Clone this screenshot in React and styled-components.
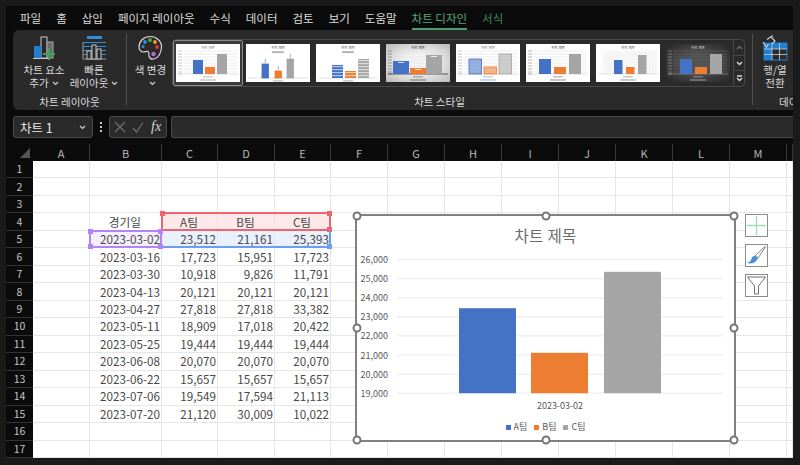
import React from 'react';
import styled, { createGlobalStyle } from 'styled-components';

const GlobalStyle = createGlobalStyle`
    html, body {
        margin: 0;
        padding: 0;
        width: 800px;
        height: 465px;
        overflow: hidden;
        background: #1a1a1a;
        font-family: "Noto Sans CJK KR", "Noto Sans", sans-serif;
    }
    * { box-sizing: border-box; }
`;

const Page = styled.div`
    width: 800px;
    height: 465px;
    padding: 6px 7px 7px 6px;
`;

const Window = styled.div`
    width: 100%;
    height: 100%;
    background: #0b0b0b;
    display: flex;
    flex-direction: column;
    overflow: hidden;
`;

const Tabs = styled.div`
    height: 24px;
    flex: none;
    display: flex;
    align-items: flex-start;
    gap: 15px;
    padding: 3px 0 0 14px;
`;

const Tab = styled.div`
    height: 21px;
    line-height: 18px;
    font-size: 11.5px;
    white-space: nowrap;
    color: ${p => (p.$active ? '#58a878' : p.$context ? '#3f8a5c' : '#dcdcdc')};
    border-bottom: 2px solid ${p => (p.$active ? '#4fa06f' : 'transparent')};
`;

const Ribbon = styled.div`
    height: 80px;
    flex: none;
    margin-left: 7px;
    display: flex;
    background: #2a2a2a;
    border-radius: 6px 0 0 6px;
    overflow: hidden;
`;

const Group = styled.div`
    flex: ${p => (p.$grow ? 1 : 'none')};
    width: ${p => p.$width}px;
    display: flex;
    flex-direction: column;
    align-items: center;
    position: relative;
`;

const GroupBody = styled.div`
    height: 63px;
    width: 100%;
    display: flex;
    padding: ${p => p.$pad || '5px 0 0 0'};
`;

const GroupLabel = styled.div`
    font-size: 10.5px;
    line-height: 17px;
    color: #dcdcdc;
    white-space: nowrap;
    ${p => p.$offset && `align-self: flex-start; margin-left: ${p.$offset}px;`}
`;

const Divider = styled.div`
    flex: none;
    width: 1px;
    margin: 4px 0 5px;
    background: #505050;
`;

const RibbonButton = styled.div`
    width: ${p => p.$width}px;
    flex: none;
    display: flex;
    flex-direction: column;
    align-items: center;
    color: #dcdcdc;
    font-size: 10.5px;
    line-height: 13px;
    white-space: nowrap;
    svg.big { margin-bottom: 2px; display: block; }
`;

const Chevron = styled.svg`
    width: 7px;
    height: 5px;
    margin-left: 3px;
    vertical-align: 1px;
    fill: none;
    stroke: #cfcfcf;
    stroke-width: 1.2;
`;

const Gallery = styled.div`
    width: 573px;
    height: 48px;
    margin: 4px 0 0 -1px;
    flex: none;
    border: 1px solid #484848;
    border-radius: 4px;
    display: flex;
    align-items: center;
`;

const ThumbFrame = styled.div`
    width: 70px;
    height: 46px;
    flex: none;
    display: flex;
    align-items: center;
    justify-content: center;
    border: 1px solid ${p => (p.$selected ? '#8a8a8a' : 'transparent')};
    border-radius: 2px;
    background: ${p => (p.$selected ? '#3c3c3c' : 'transparent')};
    svg { display: block; }
`;

const GalleryScroll = styled.div`
    width: 11px;
    margin-left: auto;
    height: 100%;
    flex: none;
    display: flex;
    flex-direction: column;
    border-left: 1px solid #484848;
`;

const ScrollButton = styled.div`
    flex: 1;
    display: flex;
    align-items: center;
    justify-content: center;
    border-top: ${p => (p.$first ? 'none' : '1px solid #484848')};
    svg {
        width: 7px;
        height: 7px;
        fill: none;
        stroke: ${p => (p.$dim ? '#6a6a6a' : '#d8d8d8')};
        stroke-width: 1.3;
    }
`;

const FormulaBar = styled.div`
    flex: none;
    height: 22px;
    margin: 6px 0;
    display: flex;
    padding-left: 7px;
    align-items: stretch;
`;

const NameBox = styled.div`
    width: 80px;
    flex: none;
    background: #2a2a2a;
    border: 1px solid #4a4a4a;
    border-radius: 3px;
    color: #e8e8e8;
    font-size: 12.5px;
    padding: 0 6px;
    display: flex;
    align-items: center;
    justify-content: space-between;
`;

const Dots = styled.div`
    width: 16px;
    flex: none;
    display: flex;
    flex-direction: column;
    align-items: center;
    justify-content: center;
    gap: 2px;
    span {
        width: 2px;
        height: 2px;
        background: #c8c8c8;
    }
`;

const FormulaButtons = styled.div`
    width: 58px;
    flex: none;
    background: #2a2a2a;
    border: 1px solid #4a4a4a;
    border-radius: 3px;
    display: flex;
    align-items: center;
    padding: 0 3px 0 4px;
    gap: 6px;
    svg {
        width: 12px;
        height: 12px;
        fill: none;
        stroke: #707070;
        stroke-width: 1.2;
    }
`;

const FxLabel = styled.span`
    font-family: "Liberation Serif", serif;
    font-style: italic;
    font-size: 14px;
    line-height: 1;
    color: #d8d8d8;
    margin-left: 1px;
`;

const FormulaInput = styled.div`
    flex: 1;
    margin-left: 4px;
    background: #2a2a2a;
    border: 1px solid #4a4a4a;
    border-right: none;
    border-radius: 3px 0 0 3px;
`;

const Sheet = styled.div`
    position: relative;
    flex: none;
    height: 314px;
    background: #fff;
    display: grid;
    grid-template-columns: 27px 57px 72px 56px 57px 56px repeat(8, 57px) 1fr;
    grid-template-rows: 17px repeat(17, minmax(0, 1fr));
    font-size: 11.7px;
    line-height: 14px;
    color: #444;
`;

const Corner = styled.div`
    background: #0b0b0b;
    position: relative;
    &::after {
        content: '';
        position: absolute;
        right: 3px;
        bottom: 3px;
        border-style: solid;
        border-width: 0 0 10px 10px;
        border-color: transparent transparent #555 transparent;
    }
`;

const ColHead = styled.div`
    background: #0b0b0b;
    color: #b8b8b8;
    font-size: 11px;
    display: flex;
    align-items: center;
    justify-content: center;
    border-right: 1px solid #3a3a3a;
`;

const RowHead = styled.div`
    background: #0b0b0b;
    color: #c4c4c4;
    font-size: 10.5px;
    display: flex;
    align-items: center;
    justify-content: center;
    border-bottom: 1px solid #333;
    grid-column: 1;
    grid-row: ${p => p.$row};
`;

const Cell = styled.div`
    display: flex;
    align-items: center;
    justify-content: ${p => (p.$center ? 'center' : 'flex-end')};
    padding-right: 1px;
    white-space: nowrap;
    color: #484848;
    background: ${p => p.$fill || 'transparent'};
    border-right: 1px solid #e6e6e6;
    border-bottom: 1px solid #e6e6e6;
    min-width: 0;
    grid-row: ${p => p.$row};
    grid-column: ${p => p.$col};
`;

const RangeMark = styled.div`
    position: relative;
    z-index: 2;
    pointer-events: none;
    grid-row: ${p => p.$row};
    grid-column: ${p => p.$col};
    margin: -1px 0 0 -1px;
    border-style: solid;
    border-color: ${p => p.$color};
    border-width: ${p => p.$edges || '2px'};
`;

const RangeHandle = styled.span`
    position: absolute;
    width: 5px;
    height: 5px;
    background: ${p => p.$color};
    ${p => (p.$right ? 'right: -3px;' : 'left: -3px;')}
    ${p => (p.$bottom ? 'bottom: -3px;' : 'top: -3px;')}
`;

const ChartBox = styled.div`
    position: absolute;
    z-index: 3;
    left: 349px;
    top: 70px;
    width: 381px;
    height: 228px;
    background: #fff;
    border: 2px solid #808080;
    display: flex;
    flex-direction: column;
    align-items: center;
`;

const ChartTitle = styled.div`
    font-size: 15.5px;
    line-height: 22px;
    margin-top: 8px;
    color: #6a6a6a;
    flex: none;
    letter-spacing: 0.3px;
`;

const PlotSvg = styled.svg`
    display: block;
    flex: none;
    margin-top: 5px;
    font-family: "Noto Sans CJK KR", "Noto Sans", sans-serif;
    text { fill: #595959; font-size: 9px; }
`;

const Legend = styled.div`
    display: flex;
    gap: 7px;
    margin-top: 4px;
    font-size: 9px;
    line-height: 12px;
    color: #595959;
`;

const LegendItem = styled.div`
    display: flex;
    align-items: center;
    gap: 3px;
    &::before {
        content: '';
        width: 5px;
        height: 5px;
        background: ${p => p.$color};
    }
`;

const SizeHandle = styled.span`
    position: absolute;
    width: 9px;
    height: 9px;
    border-radius: 50%;
    background: #fff;
    border: 2px solid #767676;
    left: ${p => p.$x}%;
    top: ${p => p.$y}%;
    transform: translate(-50%, -50%);
`;

const SideTools = styled.div`
    position: absolute;
    z-index: 3;
    left: 739px;
    top: 70px;
    display: flex;
    flex-direction: column;
    gap: 7px;
`;

const SideButton = styled.div`
    width: 23px;
    height: 23px;
    background: #fff;
    border: 1px solid #8c8c8c;
    display: flex;
    align-items: center;
    justify-content: center;
`;

const columns = ['A', 'B', 'C', 'D', 'E', 'F', 'G', 'H', 'I', 'J', 'K', 'L', 'M', ''];

const rows = [
    ['2023-03-02', '23,512', '21,161', '25,393'],
    ['2023-03-16', '17,723', '15,951', '17,723'],
    ['2023-03-30', '10,918', '9,826', '11,791'],
    ['2023-04-13', '20,121', '20,121', '20,121'],
    ['2023-04-27', '27,818', '27,818', '33,382'],
    ['2023-05-11', '18,909', '17,018', '20,422'],
    ['2023-05-25', '19,444', '19,444', '19,444'],
    ['2023-06-08', '20,070', '20,070', '20,070'],
    ['2023-06-22', '15,657', '15,657', '15,657'],
    ['2023-07-06', '19,549', '17,594', '21,113'],
    ['2023-07-20', '21,120', '30,009', '10,022'],
];

const tabs = ['파일', '홈', '삽입', '페이지 레이아웃', '수식', '데이터', '검토', '보기', '도움말'];

const BLUE = '#4472c4';
const ORANGE = '#ed7d31';
const GRAY = '#a5a5a5';

const cellProps = (rowNo, colNo) => {
    const data = rowNo >= 5 && rowNo <= 15 ? rows[rowNo - 5] : null;
    if (rowNo === 4 && colNo === 1) return { text: '경기일', center: true };
    if (rowNo === 4 && colNo >= 2 && colNo <= 4) {
        return { text: `${'ABC'[colNo - 2]}팀`, center: true, fill: '#fde9e9' };
    }
    if (data && colNo >= 1 && colNo <= 4) {
        let fill;
        if (rowNo === 5) fill = colNo === 1 ? '#f6effd' : '#e9f1fc';
        return { text: data[colNo - 1], fill };
    }
    return {};
};

const Down = () => (
    <Chevron viewBox="0 0 7 5"><path d="M1 1l2.500 2.500L6 1" /></Chevron>
);

const AddChartIcon = () => (
    <svg className="big" width="26" height="26" viewBox="0 0 26 26">
        <rect x="10" y="2" width="6" height="21" fill="#2a2a2a" stroke="#c8c8c8" />
        <rect x="16" y="7" width="6" height="16" fill="#6a6a6a" stroke="#a8a8a8" />
        <rect x="3" y="11" width="7" height="12" fill="#1f7fd0" />
        <path d="M2 23.500h17" stroke="#c8c8c8" />
        <path d="M18 13v12M12 19h12" stroke="#3fa45f" strokeWidth="2" />
    </svg>
);

const QuickLayoutIcon = () => (
    <svg className="big" width="26" height="26" viewBox="0 0 26 26">
        <rect x="6" y="1" width="15" height="3" fill="#2f8fdc" />
        <path d="M2 7.500h23M2 11.500h23M2 15.500h23M2 19.500h23" stroke="#2f8fdc" />
        <path d="M2 7v17h23" fill="none" stroke="#9a9a9a" />
        <rect x="6" y="16" width="4" height="8" fill="#2a2a2a" stroke="#c4c4c4" />
        <rect x="11" y="10" width="4" height="14" fill="#2a2a2a" stroke="#c4c4c4" />
        <rect x="16" y="14" width="4" height="10" fill="#2a2a2a" stroke="#c4c4c4" />
    </svg>
);

const PaletteIcon = () => (
    <svg className="big" width="25" height="26" viewBox="0 0 25 26">
        <path
            d="M12 1.500C6 1.500 1 6 1 12c0 3 2 5 4 5 2.500 0 3.500-1 5-.5 1.500.6.500 2.500 1 4.500.5 2 2.500 3.500 5 3 4-.8 7.500-6 7.500-12C23.500 6 18.500 1.500 12 1.500z"
            fill="#2a2a2a"
            stroke="#d4d4d4"
            strokeWidth="1.2"
        />
        <circle cx="7" cy="7" r="1.900" fill="#2f8fdc" />
        <circle cx="12" cy="5" r="1.900" fill="#4caf50" />
        <circle cx="17" cy="7" r="1.900" fill="#f39c12" />
        <circle cx="19" cy="12" r="1.900" fill="#e53935" />
        <circle cx="15.500" cy="19" r="2.200" fill="#b26bd8" />
        <circle cx="5" cy="11.500" r="1.500" fill="#2f8fdc" />
    </svg>
);

const SwitchIcon = () => (
    <svg className="big" width="26" height="26" viewBox="0 0 26 26">
        <rect x="2" y="8" width="23" height="17" fill="#2a2a2a" stroke="#1f7fd0" />
        <rect x="2" y="8" width="23" height="6" fill="#1f7fd0" />
        <rect x="2" y="8" width="8" height="17" fill="#1f7fd0" />
        <path d="M10 14v11M17.500 14v11M2 19.500h23M2 14h23M10 8v6M17.500 8v6" stroke="#d0d0d0" strokeWidth="0.8" />
        <path d="M1 7l3.500 5 2-3M5 4.500L10 1v2l3 3-3 3" fill="none" stroke="#d4d4d4" strokeWidth="1.1" />
    </svg>
);

const GalleryThumb = ({ id, t }) => {
    const base = t.base || 30;
    const lineColor = t.dark ? '#5e5e5e' : '#e4e4e4';
    const colors = [BLUE, ORANGE, GRAY];
    return (
        <svg width="64" height="38" viewBox="0 0 64 38">
            <defs>
                <radialGradient id={`bg${id}`} r="0.75">
                    <stop offset="0.3" stopColor={t.bg[0]} />
                    <stop offset="1" stopColor={t.bg[1]} />
                </radialGradient>
                <pattern id={`dots${id}`} width="3" height="3" patternUnits="userSpaceOnUse">
                    <path d="M0 3L3 0M0 0l3 3" stroke="#dcdcdc" strokeWidth="0.4" />
                </pattern>
            </defs>
            <rect width="64" height="38" fill={`url(#bg${id})`} />
            {t.dots && <rect x="7" y="7" width="54" height="23" fill={`url(#dots${id})`} />}
            <text x="32" y="5" textAnchor="middle" fontSize="3.5" fill={t.title}>차트 제목</text>
            {t.topLegend && <rect x="26" y="7.500" width="12" height="1.2" fill="#8a8a8a" />}
            {t.grid && [7, 10, 13, 16, 19, 22, 25, 28].map(y => (
                <path key={y} d={`M7 ${y}H61`} stroke={lineColor} strokeWidth="0.7" />
            ))}
            {t.grid && [7, 10, 13, 16, 19, 22, 25, 28, 30].map(y => (
                <rect key={y} x="2" y={y - 0.4} width="4" height="0.8" fill={t.title} opacity="0.5" />
            ))}
            <path d={`M2 ${base}H62`} stroke={t.axis} strokeWidth={t.axisWidth || 0.6} />
            {colors.map((c, i) => (
                <g key={c}>
                    <rect
                        x={t.x[i]}
                        y={t.tops[i]}
                        width={t.w}
                        height={base - t.tops[i]}
                        fill={c}
                        fillOpacity={t.soft ? 0.55 : 1}
                        stroke={t.soft || t.whisker ? c : 'none'}
                        strokeWidth="0.8"
                    />
                    {t.stripe && [0, 3, 6, 9, 12, 15].map(d => (
                        t.tops[i] + d + 1 < base
                            ? <rect key={d} x={t.x[i]} y={t.tops[i] + d + 1} width={t.w} height="1.2" fill="#fff" opacity="0.6" />
                            : null
                    ))}
                    {t.whisker && <path d={`M${t.x[i] + t.w / 2} ${t.tops[i] - 1}v-4`} stroke="#888" strokeWidth="0.7" />}
                    {t.labels && <rect x={t.x[i] + 5} y={t.tops[i] + 1} width={t.w - 10} height="1" fill="#fff" opacity="0.8" />}
                </g>
            ))}
            <rect x="27" y={base + 2.5} width="10" height="0.8" fill={t.title} opacity="0.6" />
            {!t.topLegend && <rect x="24" y="35.5" width="16" height="1" fill={t.soft ? BLUE : t.title} opacity="0.6" />}
        </svg>
    );
};

const thumbs = [
    { bg: ['#fff', '#fff'], title: '#777', axis: '#ccc', selected: true, grid: true, x: [17, 29, 41], w: 10, tops: [16, 23, 10] },
    { bg: ['#fff', '#fff'], title: '#555', axis: '#ccc', whisker: true, topLegend: true, base: 34, x: [16, 29, 41], w: 6.5, tops: [20, 27, 15] },
    { bg: ['#fff', '#fff'], title: '#555', axis: '#ccc', stripe: true, topLegend: true, base: 34, x: [16, 29, 42], w: 11, tops: [21, 27, 15] },
    { bg: ['#f4f4f4', '#b4b4b4'], title: '#333', axis: '#555', axisWidth: 1.2, labels: true, grid: true, x: [7, 24, 40], w: 16, tops: [17, 24, 11] },
    { bg: ['#fff', '#fff'], title: '#777', axis: '#ccc', soft: true, grid: true, x: [13, 28, 43], w: 12.5, tops: [15, 23, 10] },
    { bg: ['#fff', '#fff'], title: '#444', axis: '#ccc', grid: true, x: [13, 28, 43], w: 12, tops: [15, 23, 10] },
    { bg: ['#fff', '#fff'], title: '#555', axis: '#ccc', dots: true, x: [18, 30, 42], w: 8.5, tops: [16, 23, 11] },
    { bg: ['#505050', '#222'], title: '#ddd', axis: '#999', dark: true, grid: true, x: [14, 29, 44], w: 12, tops: [15, 23, 10] },
];

const ticks = ['26,000', '25,000', '24,000', '23,000', '22,000', '21,000', '20,000', '19,000'];

// plot svg is in chart coordinates, gridlines and bars measured from the reference
const PlotArea = () => {
    const topY = 8.5;
    const step = 19.1;
    const baseY = topY + step * 7;
    const bars = [
        { x: 102, w: 57, y: 57.2, c: BLUE },
        { x: 174, w: 57, y: 101.8, c: ORANGE },
        { x: 247, w: 57, y: 20.8, c: GRAY },
    ];
    return (
        <PlotSvg width="377" height="166" viewBox="0 0 377 166">
            {ticks.map((t, i) => (
                <g key={t}>
                    <path d={`M40 ${topY + step * i}H366`} stroke="#ececec" strokeWidth="1.2" />
                    <text x="31" y={topY + step * i + 3.5} textAnchor="end">{t}</text>
                </g>
            ))}
            {bars.map(b => (
                <rect key={b.c} x={b.x} y={b.y} width={b.w} height={baseY - b.y} fill={b.c} />
            ))}
            <text x="203" y={baseY + 15.5} textAnchor="middle">2023-03-02</text>
        </PlotSvg>
    );
};

const handles = [
    [0, 0], [50, 0], [100, 0],
    [0, 50], [100, 50],
    [0, 100], [50, 100], [100, 100],
];

const App = () => (
    <Page>
        <GlobalStyle />
        <Window>
            <Tabs>
                {tabs.map(t => <Tab key={t}>{t}</Tab>)}
                <Tab $active>차트 디자인</Tab>
                <Tab $context>서식</Tab>
            </Tabs>

            <Ribbon>
                <Group $width={113}>
                    <GroupBody $pad="5px 0 0 6px">
                        <RibbonButton $width={50}>
                            <AddChartIcon />
                            <span>차트 요소</span>
                            <span>추가<Down /></span>
                        </RibbonButton>
                        <RibbonButton $width={50}>
                            <QuickLayoutIcon />
                            <span>빠른</span>
                            <span>레이아웃<Down /></span>
                        </RibbonButton>
                    </GroupBody>
                    <GroupLabel>차트 레이아웃</GroupLabel>
                </Group>
                <Divider />

                <Group $width={625}>
                    <GroupBody $pad="5px 0 0 1px">
                        <RibbonButton $width={45}>
                            <PaletteIcon />
                            <span>색 변경</span>
                            <span><Down /></span>
                        </RibbonButton>
                        <Gallery>
                            {thumbs.map((t, i) => (
                                <ThumbFrame key={i} $selected={t.selected}>
                                    <GalleryThumb id={i} t={t} />
                                </ThumbFrame>
                            ))}
                            <GalleryScroll>
                                <ScrollButton $first $dim>
                                    <svg viewBox="0 0 7 7"><path d="M1 5l2.500-2.500L6 5" /></svg>
                                </ScrollButton>
                                <ScrollButton>
                                    <svg viewBox="0 0 7 7"><path d="M1 2l2.500 2.500L6 2" /></svg>
                                </ScrollButton>
                                <ScrollButton>
                                    <svg viewBox="0 0 7 7"><path d="M1 1h5M1 3l2.500 2.500L6 3" /></svg>
                                </ScrollButton>
                            </GalleryScroll>
                        </Gallery>
                    </GroupBody>
                    <GroupLabel>차트 스타일</GroupLabel>
                </Group>
                <Divider />

                <Group $grow>
                    <GroupBody>
                        <RibbonButton $width={44}>
                            <SwitchIcon />
                            <span>행/열</span>
                            <span>전환</span>
                        </RibbonButton>
                    </GroupBody>
                    <GroupLabel $offset={26}>데이터</GroupLabel>
                </Group>
            </Ribbon>

            <FormulaBar>
                <NameBox>
                    <span>차트 1</span>
                    <Down />
                </NameBox>
                <Dots><span /><span /><span /></Dots>
                <FormulaButtons>
                    <svg viewBox="0 0 12 12"><path d="M1 1l10 10M11 1L1 11" /></svg>
                    <svg viewBox="0 0 12 12"><path d="M1 7l3.500 4L11 1.500" /></svg>
                    <FxLabel>fx</FxLabel>
                </FormulaButtons>
                <FormulaInput />
            </FormulaBar>

            <Sheet>
                <Corner />
                {columns.map((c, i) => <ColHead key={i}>{c}</ColHead>)}
                {Array.from({ length: 17 }, (_, r) => (
                    <React.Fragment key={r}>
                        <RowHead $row={r + 2}>{r + 1}</RowHead>
                        {columns.map((_c, c) => {
                            const { text, center, fill } = cellProps(r + 1, c);
                            return (
                                <Cell key={c} $row={r + 2} $col={c + 2} $center={center} $fill={fill}>
                                    {text}
                                </Cell>
                            );
                        })}
                    </React.Fragment>
                ))}

                <RangeMark $row="5" $col="4 / 7" $color="#f0646e">
                    <RangeHandle $color="#f0646e" />
                    <RangeHandle $color="#f0646e" $right />
                    <RangeHandle $color="#f0646e" $right $bottom />
                </RangeMark>
                <RangeMark $row="6" $col="4 / 7" $color="#6b9ef2" $edges="0 2px 2px 0">
                    <RangeHandle $color="#6b9ef2" $right $bottom />
                </RangeMark>
                <RangeMark $row="6" $col="3" $color="#b583f5">
                    <RangeHandle $color="#b583f5" />
                    <RangeHandle $color="#b583f5" $right />
                    <RangeHandle $color="#b583f5" $bottom />
                    <RangeHandle $color="#b583f5" $right $bottom />
                </RangeMark>

                <ChartBox>
                    <ChartTitle>차트 제목</ChartTitle>
                    <PlotArea />
                    <Legend>
                        <LegendItem $color={BLUE}>A팀</LegendItem>
                        <LegendItem $color={ORANGE}>B팀</LegendItem>
                        <LegendItem $color={GRAY}>C팀</LegendItem>
                    </Legend>
                    {handles.map(([x, y]) => <SizeHandle key={`${x}-${y}`} $x={x} $y={y} />)}
                </ChartBox>

                <SideTools>
                    <SideButton>
                        <svg width="19" height="19" viewBox="0 0 19 19">
                            <path d="M9.500 0v19M0 9.500h19" stroke="#a4d8b2" strokeWidth="1.3" />
                        </svg>
                    </SideButton>
                    <SideButton>
                        <svg width="21" height="21" viewBox="0 0 21 21">
                            <path d="M9 11L19 1.500l.5.5L12 13z" fill="#fff" stroke="#808080" />
                            <path d="M9 11c-3 0-3 2-4 4-.7 1.500-2 2-4 3 4 1 9 .5 11-5z" fill="#4a90d9" />
                        </svg>
                    </SideButton>
                    <SideButton>
                        <svg width="19" height="19" viewBox="0 0 19 19">
                            <path d="M.5 1h18L11.500 10v8h-4v-8z" fill="#fff" stroke="#707070" />
                        </svg>
                    </SideButton>
                </SideTools>
            </Sheet>
        </Window>
    </Page>
);

export default App;
